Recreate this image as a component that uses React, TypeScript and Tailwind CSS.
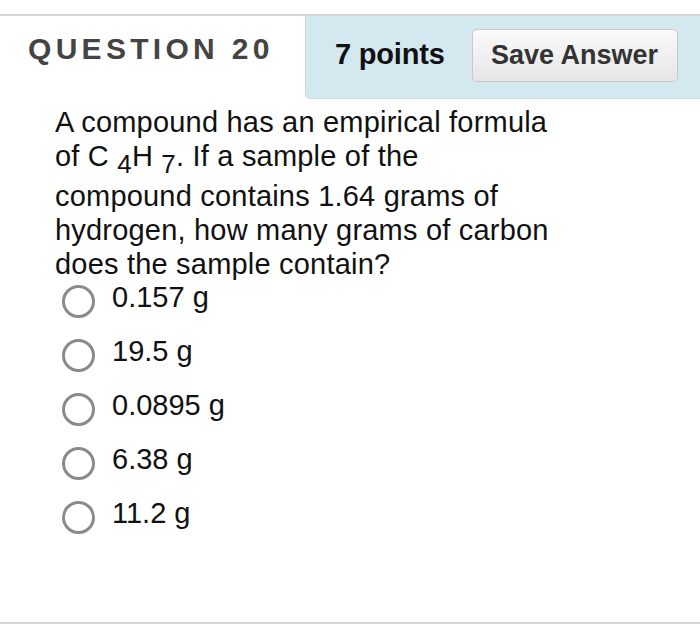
import React from "react";

const options = ["0.157 g", "19.5 g", "0.0895 g", "6.38 g", "11.2 g"];

const App: React.FC = () => {
  return (
    <div
      className="w-[700px] h-[625px] bg-white flex flex-col overflow-hidden"
      style={{ fontFamily: '"Liberation Sans", Arial, sans-serif' }}
    >
      <div className="h-[14px]" />
      <div className="border-t-2 border-[#d6d6d6] flex h-[85px]">
        <div className="w-[305px] pl-[28px] pt-[18px]">
          <h1 className="text-[30px] font-bold tracking-[4.3px] text-[#444] leading-none">
            QUESTION 20
          </h1>
        </div>
        <div className="flex-1 bg-[#d3e9ef] rounded-bl-[5px] border-l border-b border-[#c4dde4] flex items-center pl-[29px] pb-[4px]">
          <span className="text-[29px] font-bold text-[#111] tracking-[-0.2px]">
            7 points
          </span>
          <button className="ml-[27px] w-[206px] h-[53px] rounded-[5px] border border-[#c8c8c8] bg-gradient-to-b from-[#fafafa] to-[#e6e6e6] text-[27px] font-bold text-[#333]">
            Save Answer
          </button>
        </div>
      </div>
      <div className="pl-[55px] pt-[6px] text-[29px] tracking-[0.2px] text-[#111] leading-[34px]">
        <p>A compound has an empirical formula</p>
        <p>
          of C <span className="relative top-[7px] text-[26px]">4</span>H{" "}
          <span className="relative top-[7px] text-[26px]">7</span>. If a sample of the
        </p>
        <p className="mt-[5px]">compound contains 1.64 grams of</p>
        <p>hydrogen, how many grams of carbon</p>
        <p>does the sample contain?</p>
      </div>
      <div className="pl-[62px] flex flex-col gap-[22px] mt-[4px]">
        {options.map((o) => (
          <label key={o} className="flex items-center h-[32px]">
            <span className="w-[33px] h-[33px] rounded-full border-[3px] border-[#8a8a8a] bg-white" />
            <span className="ml-[17px] text-[29px] text-[#111] -mt-[6px]">{o}</span>
          </label>
        ))}
      </div>
      <div className="flex-1" />
      <div className="border-t-2 border-[#d6d6d6] h-[3px]" />
    </div>
  );
};

export default App;
